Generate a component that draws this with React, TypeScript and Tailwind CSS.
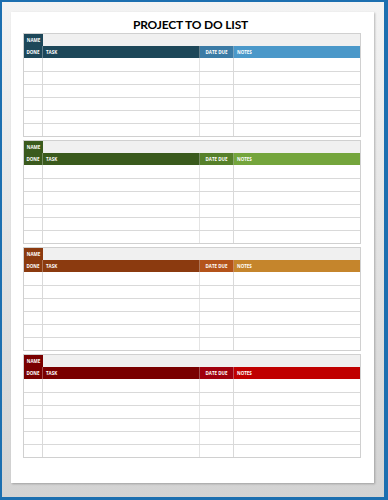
import React from 'react';

type Theme = { dark: string; mid: string; light: string };

const themes: Theme[] = [
  { dark: 'bg-[#1d4759]', mid: 'bg-[#3b7ba5]', light: 'bg-[#4a98c9]' },
  { dark: 'bg-[#3a5a1d]', mid: 'bg-[#56802a]', light: 'bg-[#74a53c]' },
  { dark: 'bg-[#8b3a0f]', mid: 'bg-[#b4531a]', light: 'bg-[#c5852c]' },
  { dark: 'bg-[#7a0000]', mid: 'bg-[#a0000e]', light: 'bg-[#c00000]' },
];

const Section: React.FC<{ theme: Theme }> = ({ theme }) => {
  return (
    <div className="border border-[#d0d0d0] w-[338px]">
      {/* Name row */}
      <div className="flex h-[12px]">
        <div className={`w-[19px] ${theme.dark} text-white text-[4.5px] font-bold flex items-center justify-center`}>NAME</div>
        <div className="flex-1 bg-[#f0f0f0]" />
      </div>
      {/* Header */}
      <div className="flex h-[12px] text-white text-[4.5px] font-bold">
        <div className={`w-[19px] ${theme.dark} flex items-center justify-center border-r border-white/30`}>DONE</div>
        <div className={`w-[157px] ${theme.dark} flex items-center pl-[3px] border-r border-white/30`}>TASK</div>
        <div className={`w-[34px] ${theme.mid} flex items-center justify-center border-r border-white/30`}>DATE DUE</div>
        <div className={`flex-1 ${theme.light} flex items-center pl-[3px]`}>NOTES</div>
      </div>
      {/* Rows */}
      {Array.from({ length: 6 }).map((_, i) => (
        <div key={i} className={`flex h-[13px] ${i > 0 ? 'border-t border-[#d9d9d9]' : ''}`}>
          <div className="w-[19px] border-r border-[#d9d9d9]" />
          <div className="w-[157px] border-r border-[#e4e4e4]" />
          <div className="w-[34px] border-r border-[#d9d9d9]" />
          <div className="flex-1" />
        </div>
      ))}
    </div>
  );
};

export default function App() {
  return (
    <div className="w-[388px] h-[500px] border-l-2 border-t-2 border-r-4 border-b-[3px] border-[#1c6fb0] bg-gradient-to-b from-[#f3f3f3] to-[#d3d3d3] pt-[10px] pl-[9px]" style={{ fontFamily: '"Open Sans", sans-serif' }}>
      <div className="w-[363px] h-[471px] bg-white shadow-[1px_1px_2px_rgba(0,0,0,0.25)] pt-[4px] pl-[12px]">
        <h1 className="h-[17px] w-[338px] text-center pr-[3px] text-[12px] leading-[17px] font-bold text-black tracking-[-0.015em]" style={{ fontFamily: 'Lato, sans-serif' }}>
          PROJECT TO DO LIST
        </h1>
        <div className="flex flex-col gap-[3px]">
          {themes.map((t, i) => (
            <Section key={i} theme={t} />
          ))}
        </div>
      </div>
    </div>
  );
}
